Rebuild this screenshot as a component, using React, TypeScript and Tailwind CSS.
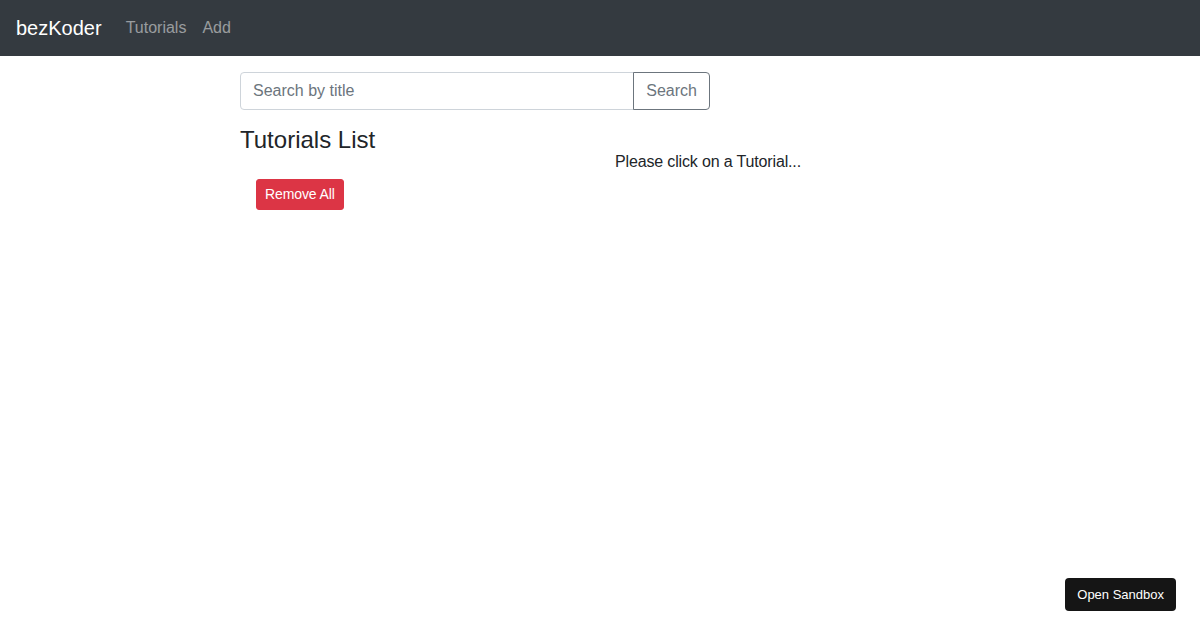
export default function App() {
  return (
    <div className="min-h-[630px] bg-white text-[#212529] font-['Liberation_Sans',Arial,sans-serif] text-base leading-6">
      <nav className="h-14 bg-[#343a40] flex items-center px-4">
        <a href="/tutorials" className="text-white text-xl leading-[30px] pt-[5px] pb-[5px] mr-4">
          bezKoder
        </a>
        <div className="flex">
          <a href="/tutorials" className="px-2 py-2 text-white/50">
            Tutorials
          </a>
          <a href="/add" className="px-2 py-2 text-white/50">
            Add
          </a>
        </div>
      </nav>

      <div className="mt-4">
        <div className="max-w-[750px] mx-auto flex flex-wrap text-left">
          <div className="w-2/3 px-[15px]">
            <div className="flex mb-4">
              <input
                type="text"
                placeholder="Search by title"
                className="flex-1 min-w-0 h-[38px] px-3 py-1.5 border border-[#ced4da] rounded-l-[4px] text-base text-[#495057] placeholder:text-[#6c757d] outline-none"
              />
              <button className="h-[38px] px-3 border border-[#6c757d] rounded-r-[4px] -ml-px text-[#6c757d] text-base">
                Search
              </button>
            </div>
          </div>

          <div className="w-1/2 px-[15px]">
            <h4 className="text-2xl leading-[1.2] font-normal mb-2">Tutorials List</h4>
            <ul className="flex flex-col"></ul>
            <button className="m-4 px-2 py-1 text-sm leading-[1.5] bg-[#dc3545] text-white border border-[#dc3545] rounded-[3px] tracking-[-0.1px]">
              Remove All
            </button>
          </div>

          <div className="w-1/2 px-[15px]">
            <div>
              <br />
              <p className="tracking-[-0.15px]">Please click on a Tutorial...</p>
            </div>
          </div>
        </div>
      </div>

      <button className="fixed right-6 bottom-[19px] h-[33px] px-3 bg-[#151515] text-white text-[13px] rounded-[4px]">
        Open Sandbox
      </button>
    </div>
  );
}
